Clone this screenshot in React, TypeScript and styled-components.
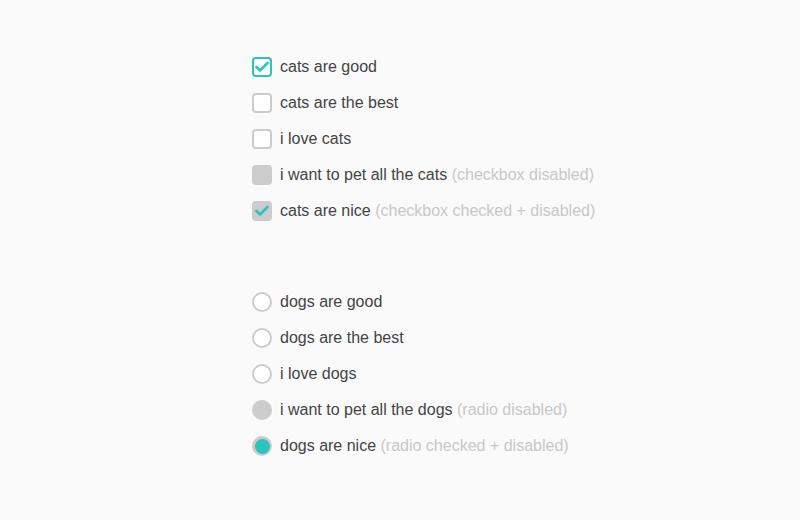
import styled, { createGlobalStyle } from "styled-components";

const GlobalStyle = createGlobalStyle`
  html, body {
    margin: 0;
    background: #fafafa;
  }

  body {
    font-family: "Liberation Sans", Arial, Helvetica, sans-serif;
    color: #444444;
  }
`;

const Page = styled.div`
  display: flex;
  flex-direction: column;
  gap: 55px;
  padding: 49px 0 0 252px;
`;

const Group = styled.div`
  display: flex;
  flex-direction: column;
`;

const Row = styled.label`
  align-items: center;
  display: flex;
  font-size: 16px;
  gap: 8px;
  height: 36px;
  line-height: 20px;
`;

const Hint = styled.span`
  color: #c8c8c8;
`;

const Box = styled.span<{ $checked?: boolean; $disabled?: boolean }>`
  align-items: center;
  background: ${(p) => (p.$disabled ? "#cccccc" : "#ffffff")};
  border: 2px solid
    ${(p) => (p.$disabled ? "#cccccc" : p.$checked ? "#2ac3bd" : "#cccccc")};
  border-radius: 4px;
  box-sizing: border-box;
  display: flex;
  flex-shrink: 0;
  height: 20px;
  justify-content: center;
  width: 20px;
`;

const Radio = styled.span<{ $disabled?: boolean }>`
  align-items: center;
  background: ${(p) => (p.$disabled ? "#cccccc" : "#ffffff")};
  border: 2px solid #cccccc;
  border-radius: 50%;
  box-sizing: border-box;
  display: flex;
  flex-shrink: 0;
  height: 20px;
  justify-content: center;
  width: 20px;
`;

const Dot = styled.span`
  background: #2ac3bd;
  border-radius: 50%;
  height: 15px;
  width: 15px;
`;

function Check() {
  return (
    <svg width="14" height="12" viewBox="0 0 14 12" fill="none">
      <path
        d="M1.5 6 L5 9.5 L12.5 2"
        stroke="#2ac3bd"
        strokeWidth="2.6"
        strokeLinecap="round"
        strokeLinejoin="round"
      />
    </svg>
  );
}

type Item = {
  label: string;
  hint?: string;
  checked?: boolean;
  disabled?: boolean;
};

const cats: Item[] = [
  { label: "cats are good", checked: true },
  { label: "cats are the best" },
  { label: "i love cats" },
  { label: "i want to pet all the cats", hint: "(checkbox disabled)", disabled: true },
  {
    label: "cats are nice",
    hint: "(checkbox checked + disabled)",
    checked: true,
    disabled: true,
  },
];

const dogs: Item[] = [
  { label: "dogs are good" },
  { label: "dogs are the best" },
  { label: "i love dogs" },
  { label: "i want to pet all the dogs", hint: "(radio disabled)", disabled: true },
  {
    label: "dogs are nice",
    hint: "(radio checked + disabled)",
    checked: true,
    disabled: true,
  },
];

export default function App() {
  return (
    <>
      <GlobalStyle />
      <Page>
        <Group>
          {cats.map((item) => (
            <Row key={item.label}>
              <Box $checked={item.checked} $disabled={item.disabled}>
                {item.checked && <Check />}
              </Box>
              <span>
                {item.label} {item.hint && <Hint>{item.hint}</Hint>}
              </span>
            </Row>
          ))}
        </Group>
        <Group>
          {dogs.map((item) => (
            <Row key={item.label}>
              <Radio $disabled={item.disabled}>
                {item.checked && <Dot />}
              </Radio>
              <span>
                {item.label} {item.hint && <Hint>{item.hint}</Hint>}
              </span>
            </Row>
          ))}
        </Group>
      </Page>
    </>
  );
}
